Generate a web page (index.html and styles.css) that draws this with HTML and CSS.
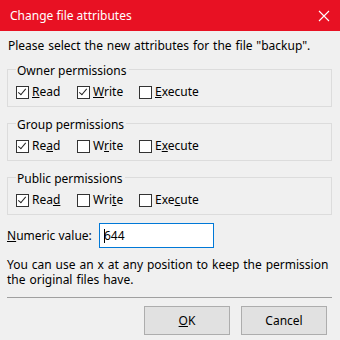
FILE: index.html
```html
<!DOCTYPE html>
<html>
<head>
<meta charset="utf-8">
<link rel="stylesheet" href="styles.css">
</head>
<body>
<div class="window">
  <div class="titlebar">
    <span class="title">Change file attributes</span>
    <svg class="close" width="12" height="12" viewBox="0 0 12 12"><path d="M1 1L11 11M11 1L1 11" stroke="#fff" stroke-width="1.1" fill="none"/></svg>
  </div>
  <div class="content">
    <p class="intro">Please select the new attributes for the file "backup".</p>

    <fieldset class="group">
      <legend>Owner permissions</legend>
      <div class="row">
        <label class="cb"><span class="box checked"></span><span><u>R</u>ead</span></label>
        <label class="cb"><span class="box checked"></span><span><u>W</u>rite</span></label>
        <label class="cb"><span class="box"></span><span><u>E</u>xecute</span></label>
      </div>
    </fieldset>

    <fieldset class="group">
      <legend>Group permissions</legend>
      <div class="row">
        <label class="cb"><span class="box checked"></span><span>Re<u>a</u>d</span></label>
        <label class="cb"><span class="box"></span><span>W<u>r</u>ite</span></label>
        <label class="cb"><span class="box"></span><span>E<u>x</u>ecute</span></label>
      </div>
    </fieldset>

    <fieldset class="group">
      <legend>Public permissions</legend>
      <div class="row">
        <label class="cb"><span class="box checked"></span><span>Rea<u>d</u></span></label>
        <label class="cb"><span class="box"></span><span>Wri<u>t</u>e</span></label>
        <label class="cb"><span class="box"></span><span>Exe<u>c</u>ute</span></label>
      </div>
    </fieldset>

    <div class="numeric">
      <span class="numlabel"><u>N</u>umeric value:</span>
      <div class="input"><span class="caret"></span>644</div>
    </div>

    <p class="hint">You can use an x at any position to keep the permission<br>the original files have.</p>

    <div class="sep"></div>

    <div class="buttons">
      <div class="btn"><u>O</u>K</div>
      <div class="btn">Cancel</div>
    </div>
  </div>
</div>
</body>
</html>
```

FILE: styles.css
```css
html, body {
  margin: 0;
  padding: 0;
  width: 340px;
  height: 340px;
  overflow: hidden;
  background: #f0f0f0;
}
.window {
  width: 340px;
  height: 340px;
  display: flex;
  flex-direction: column;
  font-family: "Noto Sans", "DejaVu Sans", sans-serif;
  font-size: 12px;
  color: #000;
  background: #f0f0f0;
}
.titlebar {
  height: 31px;
  background: #e81123;
  display: flex;
  align-items: center;
  justify-content: space-between;
  padding: 0 10px 0 10px;
  box-sizing: border-box;
  flex-shrink: 0;
}
.title {
  color: #fff;
  font-size: 12px;
  line-height: 16px;
}
.close {
  display: block;
}
.content {
  padding: 0 8px 0 7px;
  display: flex;
  flex-direction: column;
}
.intro {
  margin: 7px 0 0 1px;
  line-height: 16px;
  word-spacing: 0.7px;
}
.group {
  margin: 0;
  border: 1px solid #dcdcdc;
  padding: 0 8px 6px 8px;
  min-width: 0;
}
.group:first-of-type {
  margin-top: 5px;
}
.group + .group {
  margin-top: 6px;
}
legend {
  padding: 4px 2px 0 1px;
  margin-left: 0;
  line-height: 16px;
}
.row {
  display: grid;
  grid-template-columns: 61px 62px auto;
  align-items: center;
  height: 16px;
  margin-top: 5px;
}
.cb {
  display: flex;
  align-items: center;
  gap: 3px;
  line-height: 16px;
}
.box {
  width: 11px;
  height: 11px;
  border: 1px solid #333;
  background: #fff;
  position: relative;
  flex-shrink: 0;
}
.box.checked::after {
  content: "";
  position: absolute;
  left: 3px;
  top: 0px;
  width: 3px;
  height: 7px;
  border-right: 1.2px solid #222;
  border-bottom: 1.2px solid #222;
  transform: rotate(40deg);
}
.numeric {
  display: flex;
  align-items: center;
  margin-top: 8px;
  height: 25px;
}
.numlabel {
  width: 92px;
  line-height: 16px;
}
.input {
  width: 109px;
  height: 23px;
  border: 1px solid #0078d7;
  background: #fff;
  display: flex;
  align-items: center;
  padding-left: 4px;
  box-sizing: content-box;
  line-height: 16px;
}
.caret {
  width: 1px;
  height: 14px;
  background: #000;
  margin-right: -1px;
}
.hint {
  margin: 9px 0 0 0;
  line-height: 15px;
  word-spacing: 0.8px;
}
.sep {
  height: 1px;
  background: #a0a0a0;
  margin-top: 10px;
}
.buttons {
  display: flex;
  justify-content: flex-end;
  gap: 11px;
  margin-top: 8px;
  padding-right: 5px;
}
.btn {
  width: 84px;
  height: 27px;
  border: 1px solid #adadad;
  background: #e1e1e1;
  display: flex;
  align-items: center;
  justify-content: center;
  line-height: 16px;
}
```
